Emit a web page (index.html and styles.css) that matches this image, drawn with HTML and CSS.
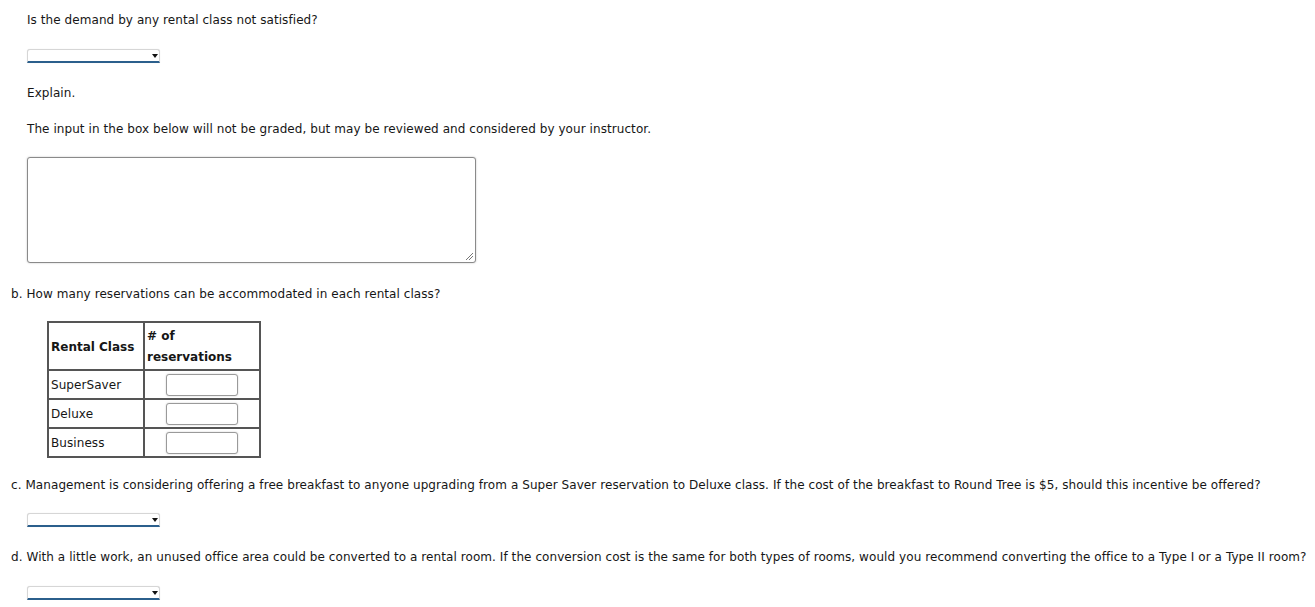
FILE: index.html
```html
<!DOCTYPE html>
<html>
<head>
<meta charset="utf-8">
<link rel="stylesheet" href="styles.css">
</head>
<body>
<div class="page">
  <div class="indent">
    <p class="line">Is the demand by any rental class not satisfied?</p>
    <div class="dd gap21"><span class="dd-arrow"></span></div>
    <p class="line gap23">Explain.</p>
    <p class="line gap21">The input in the box below will not be graded, but may be reviewed and considered by your instructor.</p>
    <div class="ta gap20"><span class="grip"></span></div>
  </div>
  <p class="line gap24">b. How many reservations can be accommodated in each rental class?</p>
  <table class="grid gap19">
    <tr class="head">
      <th class="c1">Rental Class</th>
      <th class="c2">#&nbsp;of<br>reservations</th>
    </tr>
    <tr><td class="c1">SuperSaver</td><td class="c2"><span class="box"></span></td></tr>
    <tr><td class="c1">Deluxe</td><td class="c2"><span class="box"></span></td></tr>
    <tr><td class="c1">Business</td><td class="c2"><span class="box"></span></td></tr>
  </table>
  <p class="line gap20">c. Management is considering offering a free breakfast to anyone upgrading from a Super Saver reservation to Deluxe class. If the cost of the breakfast to Round Tree is $5, should this incentive be offered?</p>
  <div class="indent">
    <div class="dd gap20"><span class="dd-arrow"></span></div>
  </div>
  <p class="line gap23">d. With a little work, an unused office area could be converted to a rental room. If the conversion cost is the same for both types of rooms, would you recommend converting the office to a Type I or a Type II room?</p>
  <div class="indent">
    <div class="dd gap21"><span class="dd-arrow"></span></div>
  </div>
</div>
</body>
</html>
```

FILE: styles.css
```css
html, body {
  margin: 0;
  padding: 0;
  background: #fff;
}
body {
  font-family: "DejaVu Sans", Verdana, sans-serif;
  font-size: 12px;
  letter-spacing: 0.07px;
  color: #161616;
}
.page {
  padding: 13px 0 0 11px;
}
.indent {
  padding-left: 16px;
}
.line {
  margin: 0;
  line-height: 15px;
  white-space: nowrap;
}
.gap19 { margin-top: 19px; }
.gap20 { margin-top: 20px; }
.gap21 { margin-top: 21px; }
.gap23 { margin-top: 23px; }
.gap24 { margin-top: 24px; }

.dd {
  position: relative;
  width: 131px;
  height: 11px;
  box-sizing: content-box;
  border: 1px solid #d6d6d6;
  border-bottom: 2px solid #2b5f8c;
  border-radius: 3px 3px 0 0;
  box-shadow: 0 0 1px rgba(0,0,0,0.15);
  background: #fff;
}
.dd-arrow {
  position: absolute;
  right: 1px;
  top: 4px;
  width: 0;
  height: 0;
  border-left: 3px solid transparent;
  border-right: 3px solid transparent;
  border-top: 4px solid #111;
}

.ta {
  position: relative;
  width: 447px;
  height: 104px;
  border: 1px solid #8a8a8a;
  border-radius: 3px;
  box-shadow: 0 0 2px rgba(0,0,0,0.25);
  background: #fff;
}
.grip {
  position: absolute;
  right: 2px;
  bottom: 2px;
  width: 7px;
  height: 7px;
  background: linear-gradient(135deg, transparent 0 45%, #777 45% 52%, transparent 52% 70%, #777 70% 78%, transparent 78%);
}

.grid {
  margin-left: 36px;
  border-collapse: collapse;
  border: 2px solid #555;
}
.grid th, .grid td {
  border: 2px solid #555;
  text-align: left;
  font-weight: normal;
}
.grid th {
  font-weight: bold;
  line-height: 21px;
  letter-spacing: 0;
  padding: 2px 2px 0;
  vertical-align: middle;
}
.head { height: 48px; }
.c1 { width: 90px; }
.c2 { width: 110px; }
.grid td {
  height: 25px;
  padding: 2px 2px 0;
  line-height: 15px;
}
.grid td.c2 {
  height: 27px;
  text-align: center;
  padding: 0 2px;
}
.box {
  display: inline-block;
  vertical-align: middle;
  width: 70px;
  height: 20px;
  border: 1px solid #9a9a9a;
  border-radius: 3px;
  box-shadow: 0 0 2px rgba(0,0,0,0.2);
  background: #fff;
}
```
